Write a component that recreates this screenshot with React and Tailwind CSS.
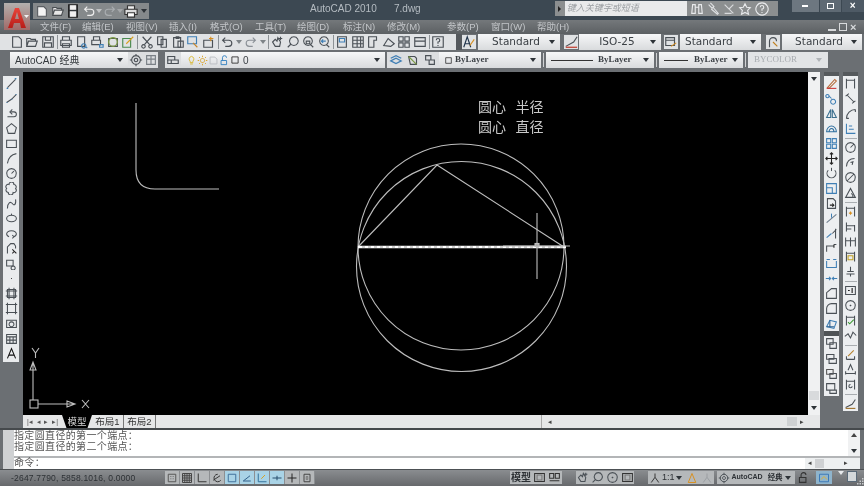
import React from 'react';

const cjk = "font-['Liberation_Sans','Noto_Sans_CJK_SC',sans-serif]";

// 16x16 toolbar drawings: [path, stroke colour, fill]
const dk = '#4a5056';
const bl = '#3f7fb5';
const icons = {
  line: [['M3 13L13 3', dk], ['M2 14h2M12 2h2', bl]],
  xline: [['M2 13l6-4 6-6', dk], ['M2 13h1M8 9h1M13 3h1', bl]],
  pline: [['M3 12h8a3 3 0 0 0 0-6H7', dk], ['M9 3L6 6l3 3', dk]],
  polygon: [['M8 2l6 5-2 7H4L2 7z', dk]],
  rect: [['M2 4h12v9H2z', dk]],
  arc: [['M3 14C4 7 8 3 14 2', dk]],
  circle: [['M8 2a6 6 0 1 0 .01 0z', dk], ['M8 8l3-3', dk]],
  cloud: [['M5 3a3 3 0 0 1 6 0 3 3 0 0 1 2 5 3 3 0 0 1-3 5 3 3 0 0 1-6 0 3 3 0 0 1-2-5 3 3 0 0 1 3-5z', dk]],
  spline: [['M3 14C3 7 7 5 9 8s5 2 4-5', dk]],
  ellipse: [['M2 8a6 4 0 1 0 12 0 6 4 0 1 0-12 0', dk], ['M8 2v2', dk]],
  earc: [['M5 12a6 4 0 1 1 6 0', dk], ['M9 10l2 2-2 2', dk]],
  block: [['M3 14V6l4-4h4l2 3v3', dk], ['M9 9l5 5M9 14l2-2', '#222']],
  makeblock: [['M2 4h8v7H2z', dk], ['M10 11a2.5 2.5 0 1 0 .01 0z', dk]],
  point: [['M7.5 8h1', '#222']],
  hatch: [['M3 3h10v10H3zM1 5h14M1 11h14M5 1v14M11 1v14', dk]],
  gradient: [['M3 3h10v10H3zM1 3h14M1 13h14M3 1v14M13 1v14', dk]],
  region: [['M2 13V4h12v9zM8 6a3 3 0 1 0 .01 0z', dk]],
  table: [['M2 3h12v11H2zM2 6h12M2 10h12M6 6v8M10 6v8', dk]],
  text: [['M3 14L8 2l5 12M5 10h6', '#111']],
  eraser: [['M3 13l9-10 2 2-9 9z', '#b56a3a'], ['M2 14h12', '#c33']],
  copyobj: [['M3 3a2 2 0 1 0 .01 0zM10 9a3 3 0 1 0 .01 0zM5 5l3 3', bl]],
  mirror: [['M7 3v10H2zM9 3v10h5z', '#3b6f8f']],
  offset: [['M2 12a6 7 0 0 1 12 0zM5 12a3 4 0 0 1 6 0', '#2f6f9f']],
  array: [['M2 2h5v5H2zM9 2h5v5H9zM2 9h5v5H2zM9 9h5v5H9z', bl]],
  move: [['M8 1v14M1 8h14M6 3l2-2 2 2M6 13l2 2 2-2M3 6L1 8l2 2M13 6l2 2-2 2', '#222']],
  rotate: [['M12 4a5.5 5.5 0 1 1-8 0', dk], ['M8 1v4', dk]],
  scale: [['M2 2h12v12H2z', bl], ['M2 7h7v7', bl]],
  stretch: [['M3 2h7l3 3v9H3z', dk], ['M6 10h5M9 8l2 2-2 2', '#222']],
  trim: [['M2 13L14 3', '#6a7a8a'], ['M8 2v5', bl]],
  extend: [['M2 13l6-5', bl], ['M9 8l5-5M13 2v12', dk]],
  brk: [['M2 12V5h9M11 3h3', dk], ['M11 3v4', '#222']],
  join: [['M2 5v8h12V5M2 3h4M10 3h4', bl]],
  joinp: [['M1 8h5M10 8h5M5 6l2 2-2 2M11 6L9 8l2 2', bl]],
  chamfer: [['M2 14V7l6-5h6v12z', dk]],
  fillet: [['M2 14V8a6 6 0 0 1 6-6h6v12z', dk]],
  explode: [['M2 12l4-8 8 2-3 8z', bl], ['M6 4v8M2 12h9', '#2b5f8f']],
  order1: [['M2 2h8v7H2zM6 7h8v7H6z', dk]],
  order2: [['M2 3h9v6H2zM5 8h9v6H5z', dk]],
  order3: [['M2 3h8v6H2z', '#555'], ['M6 8h8v6H6z', dk]],
  order4: [['M2 2h10v8H2zM6 10h8v4H6z', dk]],
  dimlin: [['M3 2v12M13 2v12M3 4h10', dk]],
  dimali: [['M2 5l4-3M10 14l4-3M4 4l8 8', dk]],
  dimarc: [['M3 14C3 8 8 3 14 3M3 14h3M14 3v3', dk]],
  dimord: [['M3 2v12h11M6 5h4M6 9h6', bl]],
  dimrad: [['M8 2a6 6 0 1 0 .01 0zM8 8l4-4', dk]],
  dimjog: [['M3 13C3 7 7 3 13 3M8 8l3-1-1 4', dk]],
  dimdia: [['M8 2a6 6 0 1 0 .01 0zM4 12l8-8', dk]],
  dimang: [['M2 14h12L8 3zM11 14a5 5 0 0 0-2-5', dk]],
  dimquick: [['M3 2v12M13 2v12M3 4h10', dk], ['M6 10h4M8 8v4', '#d89020']],
  dimbase: [['M3 3v11M13 6v8M3 7h10M3 11h6', dk]],
  dimcont: [['M2 3v11M8 3v11M14 3v11M2 7h12', dk]],
  dimspace: [['M3 2v12M13 2v12M3 4h10', dk], ['M5 7h6v5H5z', '#c0a020']],
  dimbreak: [['M8 2v6M8 11v3M4 8h8M3 11h10', dk]],
  tol: [['M2 3h12v10H2z', dk], ['M5 8h2M10 5v6', '#111']],
  center: [['M8 2a6 6 0 1 0 .01 0zM8 7v2M7 8h2', dk]],
  inspect: [['M3 2v12M13 2v12M3 4h10', dk], ['M5 10l2 2 5-5', '#3a9a30']],
  jog: [['M1 9l4-3 3 5 3-7 4 4', dk]],
  dimedit: [['M3 14h10M3 10v4M13 10v4', dk], ['M5 10l7-7', '#b5802a']],
  dimtedit: [['M2 10v4M14 10v4M2 13h12', dk], ['M5 9l3-7 3 7', dk]],
  update: [['M3 2v12M13 2v12M3 4h10', dk], ['M8 8a2 2 0 1 0 2 2', dk]],
  dimstyle: [['M2 13l8-4 4-6', dk], ['M2 14h12', '#9a6a20']],
  file: [['M3 2h7l3 3v9H3z', dk]],
  open: [['M2 13V4h4l1 1h5v2M2 13l2-6h10l-2 6z', dk]],
  save: [['M2 2h12v12H2zM5 2v4h6V2M4 14V9h8v5', dk]],
  print: [['M4 6V2h8v4M2 6h12v6H2zM4 10h8v4H4z', dk]],
  qfile: [['M3 3h7l3 3v8H3z', '#5a5e62', '#f4f4f4']],
  qopen: [['M2 13V4h4l1 1h5v2H4l-2 6h10l2-6H4', '#4a4e52', '#e6e6e6']],
  qsave: [['M3 1h10v14H3z', '#222', '#33373b'], ['M5 2h6v4H5zM5 9h6v5H5z', '#f0f0f0', '#f0f0f0']],
  qundo: [['M3 6h7a3.5 3.5 0 0 1 0 7H6M6 3L3 6l3 3', '#eeeeee']],
  qredo: [['M13 6H6a3.5 3.5 0 0 0 0 7h4M10 3l3 3-3 3', '#a9adb0']],
  qprint: [['M4 6V2h8v4', '#333', '#eeeeee'], ['M1 6h14v6H1z', '#333', '#dddddd'], ['M4 10h8v5H4z', '#333', '#ffffff']],
  preview: [['M3 2h8v11H3z', dk], ['M10 10a2.5 2.5 0 1 0 .01 0zM12 13l2 2', bl]],
  plot: [['M4 6V2h7v4M2 6h10v5H2z', dk], ['M11 11h4v3h-4z', bl]],
  d3: [['M3 4h10v9H3z', dk], ['M8 3a5 5 0 1 0 .01 0z', '#7a9a40']],
  publish: [['M2 4h9v10H2z', '#4a8a50'], ['M6 10l8-8', '#d8a020']],
  cut: [['M3 2l8 9M13 2l-8 9', dk], ['M4 11a2 2 0 1 0 .01 0zM12 11a2 2 0 1 0 .01 0z', dk]],
  copy: [['M3 2h6v9H3zM7 5h6v9H7z', dk]],
  paste: [['M3 3h8v11H3zM6 2h3v2H6z', dk], ['M8 7h6v7H8z', dk]],
  match: [['M2 2h10v8H2z', bl], ['M8 9l5 5', '#c8862a']],
  pasteb: [['M2 6h10v8H2z', dk], ['M10 2v5M8 4h5', '#d89020']],
  undo: [['M3 6h7a3.5 3.5 0 0 1 0 7H6M6 3L3 6l3 3', dk]],
  redo: [['M13 6H6a3.5 3.5 0 0 0 0 7h4M10 3l3 3-3 3', '#8a9096']],
  pan: [['M3 8l3-3 2 2 1-4 3 5-1 5H6z', dk], ['M12 2v4M10 4h4', dk]],
  zoomr: [['M9 2a5 5 0 1 0 .01 0zM6 10l-4 4', dk]],
  zoomw: [['M8 2a5 5 0 1 0 .01 0zM11 11l3 3M6 7h4v3H6z', dk]],
  zoomp: [['M8 2a5 5 0 1 0 .01 0zM11 11l3 3', dk], ['M5 7h5M7 5L5 7l2 2', bl]],
  props: [['M3 2h10v12H3z', dk], ['M5 4h6v4H5z', bl]],
  design: [['M2 2h12v12H2zM2 6h12M2 10h12M7 2v12M11 2v12', dk]],
  tool: [['M3 2h9v4h-3v8H3z', dk]],
  sheet: [['M2 12l5-8 7 6-4 3z', dk]],
  markup: [['M2 2h5v5H2zM9 2h5v5H9zM2 9h5v5H2zM9 9h5v5H9z', dk]],
  calc: [['M2 3h12v10H2zM2 7h12', dk]],
  help: [['M2 2h12v12H2z', dk], ['M6 6a2 2 0 1 1 2 2v2M8 11.5v1', dk]],
  tstyle: [['M2 14L6 2l4 12M3.5 10h5', '#23364c'], ['M9 12l5-7', '#d89020']],
  dstyle: [['M2 13l9-5 4-6', dk], ['M2 14h13', '#c03020']],
  tbstyle: [['M2 3h10v9H2zM2 6h10', dk], ['M8 13l6-4', '#d89020']],
  mstyle: [['M4 14V7a4 4 0 0 1 8 0', dk], ['M8 8l5 5', '#c08020']],
  gear: [['M8 3a5 5 0 1 0 .01 0zM8 6a2 2 0 1 0 .01 0zM8 1v2M8 13v2M1 8h2M13 8h2', dk]],
  cube: [['M3 3h10v10H3zM3 7h10M8 3v10', '#7a8086']],
  layers: [['M2 4h8v4H2zM6 8h8v4H6z', dk], ['M2 8v4h4', dk]],
  layer2: [['M2 9l6-3 6 3-6 3z', bl], ['M2 6l6-3 6 3', bl]],
  layer3: [['M3 4h7l2 2v7H5z', dk], ['M3 4l9 9', '#7a9a40']],
  layer4: [['M3 3h6v5H3zM7 8h6v5H7z', dk]],
  bulb: [['M8 2a4 4 0 0 1 2 7v2H6V9a4 4 0 0 1 2-7zM6 13h4', '#d8b830']],
  sun: [['M8 5a3 3 0 1 0 .01 0zM8 1v2M8 13v2M1 8h2M13 8h2M3 3l1.5 1.5M11.5 11.5L13 13M3 13l1.5-1.5M11.5 4.5L13 3', '#d8a020']],
  freeze: [['M3 3h7l3 3v7H3z', '#b8bcc0']],
  lock: [['M3 8h8v6H3zM5 8V4a3 3 0 0 1 6 0', '#2f7fc0']],
  square: [['M3 3h10v10H3z', '#222']],
  binoc: [['M3 3h3v10H2zM10 3h3l1 10h-4zM6 6h4', '#e8eaec']],
  wrench: [['M3 3l4 4 2-2-4-4M8 6l6 7-1 1-7-6', '#e0e2e4']],
  sat: [['M3 3l10 10M13 3L8 8M3 13h8', '#d8dadc']],
  star: [['M8 2l2 4 4 .5-3 3 1 4.500-4-2-4 2 1-4.500-3-3L6 6z', '#e8eaec']],
  ask: [['M8 1a7 7 0 1 0 .01 0z', '#e8eaec'], ['M6 6a2 2 0 1 1 2 2v2M8 11.500v1', '#e8eaec']],
  snap: [['M3 3h10v10H3zM6 6h1M9 6h1M6 9h1M9 9h1', '#555']],
  grid: [['M2 2h12v12H2zM5 2v12M8 2v12M11 2v12M2 5h12M2 8h12M2 11h12', '#444']],
  ortho: [['M3 2v11h11', '#333']],
  polar: [['M9 3a5 5 0 1 0 4 8M3 11l9-6', '#333']],
  osnap: [['M3 3h10v10H3z', '#3f6f9a']],
  otrack: [['M3 12L12 5M3 12h10', '#2f5f8a']],
  ducs: [['M3 2v11h11', '#2f6f9a'], ['M7 9l5-5', '#d8a020']],
  dyn: [['M2 8h12M8 5v6', '#244a6a']],
  lwt: [['M2 8h12M8 2v12', '#222']],
  qp: [['M4 3h8v10H4z', '#444'], ['M7 6h2v4H7z', '#777']],
  layout: [['M2 3h12v10H2z', '#333'], ['M5 5h6v6H5z', '#777']],
  layout2: [['M2 3h5v6H2zM9 3h5v6H9zM2 12h12', '#333']],
  anno: [['M8 2v5M3 14l5-7 5 7', '#333']],
  anno2: [['M8 2L3 14h10z', '#d89020']],
  anno3: [['M8 2v5M3 14l5-7 5 7', '#9a9ea2']],
  unlock: [['M3 8h8v6H3zM5 8V5a3 3 0 0 1 6 0', '#333']],
  hw: [['M2 3h12v10H2z', '#3a78b8'], ['M4 10l4-4 4 4', '#e0b030']],
};

function Ic({ n, s = 14, className = '' }) {
  return (
    <svg viewBox="0 0 16 16" width={s} height={s} fill="none" strokeWidth="1.3" className={`shrink-0 ${className}`}>
      {icons[n].map(([d, c, f], i) => <path key={i} d={d} stroke={c} fill={f || 'none'} />)}
    </svg>
  );
}

const Sep = () => <div className="w-px h-[14px] bg-[#8d9296] mx-[1px] shrink-0" />;
const Caret = ({ c = 'border-t-[#2e3338]' }) => <div className={`w-0 h-0 border-x-[3px] border-x-transparent border-t-[4px] shrink-0 ${c}`} />;

function Combo({ w, children, center }) {
  return (
    <div className={`${w} h-[16px] flex items-center px-[5px] bg-gradient-to-b from-[#f6f7f8] to-[#d9dbdd] shrink-0 text-[#3a3f44]`}>
      <div className={`flex-1 flex items-center min-w-0 whitespace-nowrap ${center ? 'justify-center' : ''}`}>{children}</div>
      <Caret />
    </div>
  );
}

function IconRow({ items }) {
  return items.map((n, i) =>
    n === '|' ? <Sep key={i} /> : n === 'v' ? <div key={i} className="w-[8px] flex justify-center"><Caret c="border-t-[#7e8488]" /></div> : <div key={i} className="w-[15.500px] flex justify-center shrink-0"><Ic n={n} /></div>
  );
}

function Bar({ items }) {
  return (
    <div className="w-[15px] bg-[#eceef0] flex flex-col items-center">
      {items.map((n, i) =>
        n === '-' ? <div key={i} className="h-px w-[12px] bg-[#a9adb1] my-[1.500px]" /> : <div key={i} className="h-[15px] flex items-center justify-center"><Ic n={n} s={13} /></div>
      )}
    </div>
  );
}

const menu = [['文件(F)', 'w-[42px]'], ['编辑(E)', 'w-[44px]'], ['视图(V)', 'w-[43px]'], ['插入(I)', 'w-[41px]'], ['格式(O)', 'w-[45px]'], ['工具(T)', 'w-[42px]'], ['绘图(D)', 'w-[46px]'], ['标注(N)', 'w-[44px]'], ['修改(M)', 'w-[60px]'], ['参数(P)', 'w-[44px]'], ['窗口(W)', 'w-[46px]'], ['帮助(H)', 'w-[44px]']];

export default function App() {
  return (
    <div className={`relative w-[864px] h-[486px] overflow-hidden flex flex-col bg-[#6b6f73] blur-[0.5px] ${cjk}`}>
      {/* app button */}
      <div className="absolute left-[4px] top-[3px] w-[26px] h-[27px] bg-gradient-to-b from-[#b2b0ae] to-[#a06a68] flex items-start z-10">
        <svg viewBox="0 0 26 27" width="26" height="27">
          <defs>
            <linearGradient id="acadRed" x1="0" y1="0" x2="0" y2="1">
              <stop offset="0" stopColor="#e8453a" />
              <stop offset="1" stopColor="#b81c18" />
            </linearGradient>
          </defs>
          <path d="M4 25L11 5h4l7 20h-5l-1-5h-6l-1.500 5zM11 16h4l-2-7z" fill="url(#acadRed)" fillRule="evenodd" />
          <path d="M20 12h5l-2.500 3z" fill="#f2f2f2" />
        </svg>
      </div>

      {/* title bar */}
      <div className="h-[20px] shrink-0 bg-[#3c4852] flex items-start">
        <div className="ml-[33px] mt-[3px] w-[116px] h-[16px] bg-[#85898b] flex items-center shrink-0 pl-[2px]">
          <Ic n="qfile" /><Ic n="qopen" className="ml-[2px]" /><Ic n="qsave" className="ml-[1px]" />
          <Ic n="qundo" className="ml-[1.500px]" /><Caret c="border-t-[#c0c2c4]" className="ml-[1px]" /><Ic n="qredo" className="ml-[1.500px]" /><Caret c="border-t-[#a5a7a9]" />
          <Ic n="qprint" className="ml-[1px]" /><div className="ml-[3px]"><Caret /></div>
        </div>
        <div className="ml-[161px] mt-[1px] w-[78px] text-[10px] leading-[15px] text-[#b5bcc2] whitespace-nowrap">AutoCAD 2010</div>
        <div className="ml-[6px] mt-[1px] text-[10px] leading-[15px] text-[#b5bcc2]">7.dwg</div>
        <div className="ml-[134px] mt-[1px] w-[223px] h-[15px] flex items-center bg-[#8c8f90] shrink-0">
          <div className="w-[10px] flex justify-center"><div className="w-0 h-0 border-y-[3px] border-y-transparent border-l-[3px] border-l-[#222]" /></div>
          <div className="w-[122px] h-full bg-[#e9eaeb] text-[9px] leading-[15px] italic text-[#9a9ea2] px-[2px]">键入关键字或短语</div>
          <div className="flex-1 flex items-center justify-around pl-[2px] pr-[8px]">
            <Ic n="binoc" /><Ic n="wrench" /><Ic n="sat" /><Ic n="star" /><Ic n="ask" />
          </div>
        </div>
        <div className="ml-[14px] w-[72px] h-[12px] flex text-white">
          <div className="w-[27px] bg-[#6d7780] flex items-center justify-center"><div className="w-[6px] h-[2px] bg-white" /></div>
          <div className="w-[21px] bg-[#5f6a74] ml-px flex items-center justify-center"><div className="w-[7px] h-[6px] border border-white" /></div>
          <div className="flex-1 bg-[#4e5a65] ml-px flex items-center justify-center text-[10px] leading-none font-bold">×</div>
        </div>
      </div>

      {/* menu */}
      <div className="h-[14px] shrink-0 bg-gradient-to-b from-[#74787b] to-[#5c6063] flex items-center pl-[40px] text-[9.500px] text-[#c2c5c8]">
        {menu.map(([m, w]) => <div key={m} className={`${w} whitespace-nowrap shrink-0`}>{m}</div>)}
        <div className="ml-auto mr-[5px] flex items-center gap-[3px]">
          <div className="w-[8px] h-[2px] bg-[#d8dadc] mt-[5px]" />
          <div className="w-[8px] h-[8px] border border-[#d8dadc]" />
          <div className="w-[9px] text-[11px] leading-[8px] font-bold text-[#d8dadc]">×</div>
        </div>
      </div>

      {/* standard toolbar */}
      <div className="h-[16px] mb-[1px] shrink-0 flex items-center bg-[#e0e2e4] pl-[9px]">
        <IconRow items={['file', 'open', 'save', '|', 'print', 'preview', 'plot', 'd3', 'publish', '|', 'cut', 'copy', 'paste', 'match', 'pasteb', '|', 'undo', 'v', 'redo', 'v', '|', 'pan', 'zoomr', 'zoomw', 'zoomp', '|', 'props', 'design', 'tool', 'sheet', 'markup', 'calc', '|', 'help']} />
        <div className="w-[6px] h-full ml-[10px] bg-[#55595d] shrink-0" />
        <div className="flex items-center h-full bg-[#6b6f73] flex-1 text-[10.500px] font-['DejaVu_Sans',sans-serif]">
          <Ic n="tstyle" className="bg-[#e0e2e4]" />
          <div className="ml-[2px]"><Combo w="w-[82px]" center>Standard</Combo></div>
          <Ic n="dstyle" className="ml-[4px] bg-[#e0e2e4]" />
          <div className="ml-[1px]"><Combo w="w-[82px]" center>ISO-25</Combo></div>
          <Ic n="tbstyle" className="ml-[3px] bg-[#e0e2e4]" />
          <div className="ml-[2px]"><Combo w="w-[81px]">Standard</Combo></div>
          <Ic n="mstyle" className="ml-[5px] bg-[#e0e2e4]" />
          <div className="ml-[2px]"><Combo w="w-[80px]" center>Standard</Combo></div>
        </div>
      </div>

      {/* layers toolbar */}
      <div className="h-[18px] shrink-0 flex items-center pl-[10px] text-[9px] bg-[#6b6f73]">
        <Combo w="w-[118px]"><span className="text-[10px] text-[#33383c]">AutoCAD 经典</span></Combo>
        <div className="w-[30px] flex justify-around shrink-0 bg-[#dcdee0] h-[16px] items-center"><Ic n="gear" /><Ic n="cube" /></div>
        <div className="ml-[7px] w-[16px] h-[16px] bg-[#dcdee0] shrink-0 flex items-center justify-center"><Ic n="layers" /></div>
        <Combo w="w-[204px]">
          <Ic n="bulb" s={11} /><Ic n="sun" s={11} /><Ic n="freeze" s={11} /><Ic n="lock" s={11} /><Ic n="square" s={10} /><span className="ml-[3px] text-[10px]">0</span>
        </Combo>
        <div className="ml-[2px] w-[52px] h-[16px] flex justify-around items-center bg-[#dcdee0] shrink-0"><Ic n="layer2" /><Ic n="layer3" /><Ic n="layer4" /></div>
        <div className="flex items-center font-['Liberation_Serif',serif] font-bold text-[9px]">
          <Combo w="w-[102px]"><Ic n="square" s={9} /><span className="ml-[2px]">ByLayer</span></Combo>
          <div className="w-[1px] h-[14px] bg-[#d0d2d4] mx-[2px]" />
          <Combo w="w-[108px]"><div className="w-[42px] h-px bg-[#333] mr-[5px]" />ByLayer</Combo>
          <div className="w-[1px] h-[14px] bg-[#d0d2d4] mx-[2px]" />
          <Combo w="w-[84px]"><div className="w-[24px] h-px bg-[#333] mr-[6px]" />ByLayer</Combo>
          <div className="w-[1px] h-[14px] bg-[#d0d2d4] mx-[2px]" />
          <div className="w-[80px] h-[16px] bg-[#e2e4e6] text-[#a9adb1] flex items-center px-[6px] justify-between font-normal">
            BYCOLOR<Caret c="border-t-[#b0b4b8]" />
          </div>
        </div>
      </div>

      {/* middle */}
      <div className="flex h-[343px] shrink-0 mt-[3px]">
        <div className="w-[23px] shrink-0 pl-[3px] pt-[4px] bg-[#6b6f73]">
          <div className="w-[16px] h-[286px] bg-[#e9ebed] flex flex-col items-center">
            {['line', 'xline', 'pline', 'polygon', 'rect', 'arc', 'circle', 'cloud', 'spline', 'ellipse', 'earc', 'block', 'makeblock', 'point', 'hatch', 'gradient', 'region', 'table', 'text'].map((n) => (
              <div key={n} className="h-[15px] flex items-center justify-center"><Ic n={n} s={13} /></div>
            ))}
          </div>
        </div>

        <div className="relative flex-1 bg-black overflow-hidden">
          <svg viewBox="23 72 785 343" className="absolute inset-0 w-full h-full" fill="none" stroke="#bdbdbd" strokeWidth="1.100">
            <path d="M136 103V170Q136 189 155 189H219" />
            <circle cx="461" cy="247" r="103" />
            <circle cx="461.500" cy="266.500" r="105" />
            <path d="M358 247L437 165L564 247" />
            <path d="M358 247H566" stroke="#ffffff" strokeWidth="2.400" />
            <path d="M362 247H566" stroke="#777" strokeWidth="0.7" strokeDasharray="3 3" />
            <path d="M537 213V279M503 246H570" />
            <rect x="535" y="243.500" width="4" height="3" fill="#aaa" />
            <path d="M33 400V362M30 370L33 362L36 370Z" />
            <rect x="30" y="400" width="8" height="8" />
            <path d="M38 404H75M67 401L75 404L67 407Z" />
            <path d="M32 348L35.500 353L39 348M35.500 353V358M82 400L89 408M89 400L82 408" />
          </svg>
          <div className="absolute left-[455px] top-[24px] text-[14px] leading-[20px] text-[#c9c9c9] font-['Noto_Sans_CJK_SC',sans-serif] whitespace-pre">
            圆心   半径<br />圆心   直径
          </div>
        </div>

        <div className="w-[12px] shrink-0 bg-[#f0f1f2] flex flex-col items-center justify-between py-[5px]">
          <Caret /><div className="mt-auto mb-[6px] w-[10px] h-[9px] bg-[#d8dadc]" /><Caret />
        </div>

        <div className="w-[44px] shrink-0 pl-[4px] flex gap-[4px] bg-[#6b6f73]">
          <div className="flex flex-col">
            <div className="h-[4px] bg-[#55595c]" />
            <Bar items={['eraser', 'copyobj', 'mirror', 'offset', 'array', 'move', 'rotate', 'scale', 'stretch', 'trim', 'extend', 'brk', 'join', 'joinp', 'chamfer', 'fillet', 'explode']} />
            <div className="h-[5px] bg-[#4f5356]" />
            <Bar items={['order1', 'order2', 'order3', 'order4']} />
          </div>
          <div className="flex flex-col">
            <div className="h-[4px] bg-[#55595c]" />
            <Bar items={['dimlin', 'dimali', 'dimarc', 'dimord', '-', 'dimrad', 'dimjog', 'dimdia', 'dimang', '-', 'dimquick', 'dimbase', 'dimcont', 'dimspace', 'dimbreak', '-', 'tol', 'center', 'inspect', 'jog', '-', 'dimedit', 'dimtedit', 'update', '-', 'dimstyle']} />
          </div>
        </div>
      </div>

      {/* layout tabs */}
      <div className="h-[13px] shrink-0 flex text-[9.500px] leading-[13px]">
        <div className="w-[23px] bg-[#6b6f73] shrink-0" />
        <div className="w-[797px] bg-[#e6e7e8] flex items-center shrink-0">
          <div className="w-[39px] flex justify-around px-[2px] text-[#555] text-[7px]"><span>|◂</span><span>◂</span><span>▸</span><span>▸|</span></div>
          <div className="w-[30px] bg-black text-[#d8d8d8] text-center [clip-path:polygon(0_0,100%_0,85%_100%,15%_100%)]">模型</div>
          <div className="w-[32px] text-center text-[#333] border-r border-[#777]">布局1</div>
          <div className="w-[32px] text-center text-[#333] border-r border-[#777]">布局2</div>
          <div className="w-[385px]" />
          <div className="flex-1 flex items-center border-l border-[#aaa] pl-[6px] text-[#444] text-[7px]">
            <span>◂</span>
            <div className="ml-auto w-[10px] h-[9px] bg-[#cfd1d3]" />
            <span className="ml-[3px] mr-[16px]">▸</span>
          </div>
        </div>
        <div className="flex-1 bg-[#6b6f73]" />
      </div>

      {/* command window */}
      <div className="h-[41px] shrink-0 border-t-[2px] border-[#45494c] flex pl-[3px] bg-[#6b6f73]">
        <div className="w-[11px] bg-[#cfd1d3] shrink-0" />
        <div className="flex-1 flex flex-col bg-white text-[10px] leading-[10.500px] text-[#555] tracking-[0.35px]">
          <div className="h-[26px] flex">
            <div className="flex-1 pt-[1px]">指定圆直径的第一个端点：<br />指定圆直径的第二个端点：</div>
            <div className="w-[12px] bg-[#f0f1f2] flex flex-col items-center justify-between py-[3px]">
              <div className="w-0 h-0 border-x-[3px] border-x-transparent border-b-[4px] border-b-[#444]" /><Caret />
            </div>
          </div>
          <div className="h-[1.500px] bg-[#b3b5b7]" />
          <div className="flex-1 flex items-center">
            <div className="flex-1">命令：</div>
            <div className="w-[55px] h-full bg-[#eef0f1] flex items-center text-[7px] text-[#444] pl-[3px]">
              <span>◂</span><div className="w-[9px] h-[9px] bg-[#cfd1d3] ml-[3px]" /><span className="ml-[20px]">▸</span>
            </div>
          </div>
        </div>
        <div className="w-[4px] shrink-0" />
      </div>

      {/* status bar */}
      <div className="flex-1 flex items-start bg-gradient-to-b from-[#8a8d90] to-[#67696c] border-t border-[#4c5053] pl-[11px] pt-[1px] text-[9px] text-[#2d3135]">
        <div className="w-[154px] leading-[14px] text-[8.500px] tracking-[0.2px] whitespace-nowrap shrink-0">-2647.7790, 5858.1016, 0.0000</div>
        <div className="flex h-[13px] bg-[#b5b8ba] shrink-0">
          {['snap', 'grid', 'ortho', 'polar'].map((n) => <div key={n} className="w-[15px] flex items-center justify-center border-r border-[#8c8f92]"><Ic n={n} s={12} /></div>)}
          {['osnap', 'otrack', 'ducs', 'dyn'].map((n) => <div key={n} className="w-[15px] flex items-center justify-center bg-[#a9d3e6] border-r border-[#8c8f92]"><Ic n={n} s={12} /></div>)}
          {['lwt', 'qp'].map((n) => <div key={n} className="w-[15px] flex items-center justify-center border-r border-[#8c8f92]"><Ic n={n} s={12} /></div>)}
        </div>
        <div className="w-[195px] shrink-0" />
        <div className="flex h-[13px] items-center bg-[#b5b8ba] px-[1px] shrink-0 font-bold">
          <span className="mr-[2px] text-[10px]">模型</span><Ic n="layout" s={13} /><Ic n="layout2" s={13} className="ml-[2px]" />
        </div>
        <div className="w-[14px] shrink-0" />
        <div className="flex h-[13px] items-center gap-[2px] bg-[#b5b8ba] shrink-0">
          <Ic n="pan" s={13} /><Ic n="zoomr" s={13} /><Ic n="center" s={13} /><Ic n="layout" s={13} />
        </div>
        <div className="w-[14px] shrink-0" />
        <div className="flex h-[13px] items-center bg-[#b5b8ba] px-[1px] shrink-0">
          <Ic n="anno" s={12} /><span className="mx-[1px]">1:1</span><Caret />
          <Ic n="anno2" s={12} className="ml-[4px]" /><Ic n="anno3" s={12} className="ml-[3px]" />
        </div>
        <div className="w-[3px] shrink-0" />
        <div className="flex h-[13px] w-[78px] items-center bg-[#b5b8ba] pl-[1px] shrink-0 text-[7.500px] font-bold whitespace-nowrap">
          <Ic n="gear" s={12} /><span className="ml-[2px] text-[7px]">AutoCAD</span><span className="ml-[5px]">经典</span><span className="ml-[2px]"><Caret /></span>
        </div>
        <Ic n="unlock" s={13} className="ml-[2px]" />
        <div className="ml-[6px] w-[16px] h-[13px] bg-[#8fb4cc] flex items-center justify-center shrink-0"><Ic n="hw" s={12} /></div>
        <div className="ml-[6px]"><Caret c="border-t-[#e8eaec]" /></div>
        <div className="ml-[3px] w-[10px] h-[11px] bg-[#d4d8da] border border-[#5a6a78] shrink-0" />
        <svg viewBox="0 0 7 7" width="7" height="7" className="ml-auto mr-[1px] mt-[7px] shrink-0" fill="#c8cacc">
          <rect x="5" y="0" width="1.500" height="1.500" /><rect x="2.500" y="2.500" width="1.500" height="1.500" /><rect x="5" y="2.500" width="1.500" height="1.500" />
          <rect x="0" y="5" width="1.500" height="1.500" /><rect x="2.500" y="5" width="1.500" height="1.500" /><rect x="5" y="5" width="1.500" height="1.500" />
        </svg>
      </div>
    </div>
  );
}
